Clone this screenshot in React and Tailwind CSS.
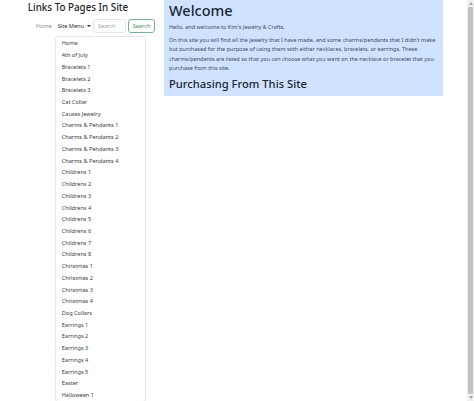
const menuItems = [
  'Home',
  '4th of July',
  'Bracelets 1',
  'Bracelets 2',
  'Bracelets 3',
  'Cat Collar',
  'Causes Jewelry',
  'Charms & Pendants 1',
  'Charms & Pendants 2',
  'Charms & Pendants 3',
  'Charms & Pendants 4',
  'Childrens 1',
  'Childrens 2',
  'Childrens 3',
  'Childrens 4',
  'Childrens 5',
  'Childrens 6',
  'Childrens 7',
  'Childrens 8',
  'Christmas 1',
  'Christmas 2',
  'Christmas 3',
  'Christmas 4',
  'Dog Collars',
  'Earrings 1',
  'Earrings 2',
  'Earrings 3',
  'Earrings 4',
  'Earrings 5',
  'Easter',
  'Halloween 1',
];

function SiteNav() {
  return (
    <div className="flex flex-col w-[157px] pr-[2px]">
      <h3 className="text-center pl-[1px] text-[9.8px] leading-[16px] font-medium text-[#212529]">Links To Pages In Site</h3>
      <div className="flex items-center justify-end mt-[3px] h-[14px]">
        <span className="text-[5.6px] text-[#8c8f92] mr-[6px]">Home</span>
        <div className="relative mr-[2px]">
          <span className="flex items-center text-[5.6px] text-[#2b2f33]">
            Site Menu
            <span className="ml-[3px] border-x-[2px] border-t-[2.5px] border-x-transparent border-t-[#2b2f33]" />
          </span>
          {/* open dropdown */}
          <div className="absolute left-[-3px] top-[14px] w-[91px] bg-white border border-[#e6e8eb] rounded-[3px] pt-[1px]">
            {menuItems.map((item) => (
              <div key={item} className="h-[11.73px] flex items-center pl-[6px] text-[5.6px] text-[#3a3e43] whitespace-nowrap">
                {item}
              </div>
            ))}
          </div>
        </div>
        <div className="w-[33px] h-[14px] border border-[#e4e7ea] rounded-[3px] flex items-center pl-[4px] text-[5.6px] text-[#a2a7ac]">
          Search
        </div>
        <div className="ml-[2px] w-[27px] h-[14px] border border-[#7ab394] rounded-[3px] flex items-center justify-center text-[5.6px] text-[#3d8f64]">
          Search
        </div>
      </div>
    </div>
  );
}

export default function App() {
  return (
    <div
      className="relative h-[401px] overflow-hidden bg-white text-[#212529]"
      style={{ fontFamily: '"Noto Sans", "Open Sans", sans-serif' }}
    >
      <div className="flex">
        <SiteNav />
        <div className="ml-[7px] w-[279px] h-[96px] bg-[#cfe2ff] px-[5px] pt-[1px] text-[#3a4a63]">
          <h1 className="text-[14.5px] leading-[18px] font-medium text-[#1c2635]">Welcome</h1>
          <p className="mt-[4px] text-[5.5px] leading-[9px]">Hello, and welcome to Kim's Jewelry &amp; Crafts.</p>
          <p className="mt-[4px] text-[5.5px] leading-[9.3px]">
            On this site you will find all the jewelry that I have made, and some charms/pendants that I didn't make
            <br />
            but purchased for the purpose of using them with either necklaces, bracelets, or earrings. These
            <br />
            charms/pendants are listed so that you can choose what you want on the necklace or bracelet that you
            <br />
            purchase from this site.
          </p>
          <h2 className="mt-[3px] text-[11.2px] leading-[15px] font-medium text-[#1c2635]">Purchasing From This Site</h2>
        </div>
      </div>
      {/* page scrollbar */}
      <div className="absolute right-0 top-0 w-[7px] h-full bg-[#f1f1f1] flex flex-col items-center">
        <span className="mt-[2px] border-x-[2px] border-b-[3px] border-x-transparent border-b-[#a3a3a3]" />
        <div className="mt-[2px] w-[5px] flex-1 bg-[#c1c1c1] rounded-[1px]" />
        <span className="mt-[2px] mb-[2px] border-x-[2px] border-t-[3px] border-x-transparent border-t-[#a3a3a3]" />
      </div>
    </div>
  );
}
